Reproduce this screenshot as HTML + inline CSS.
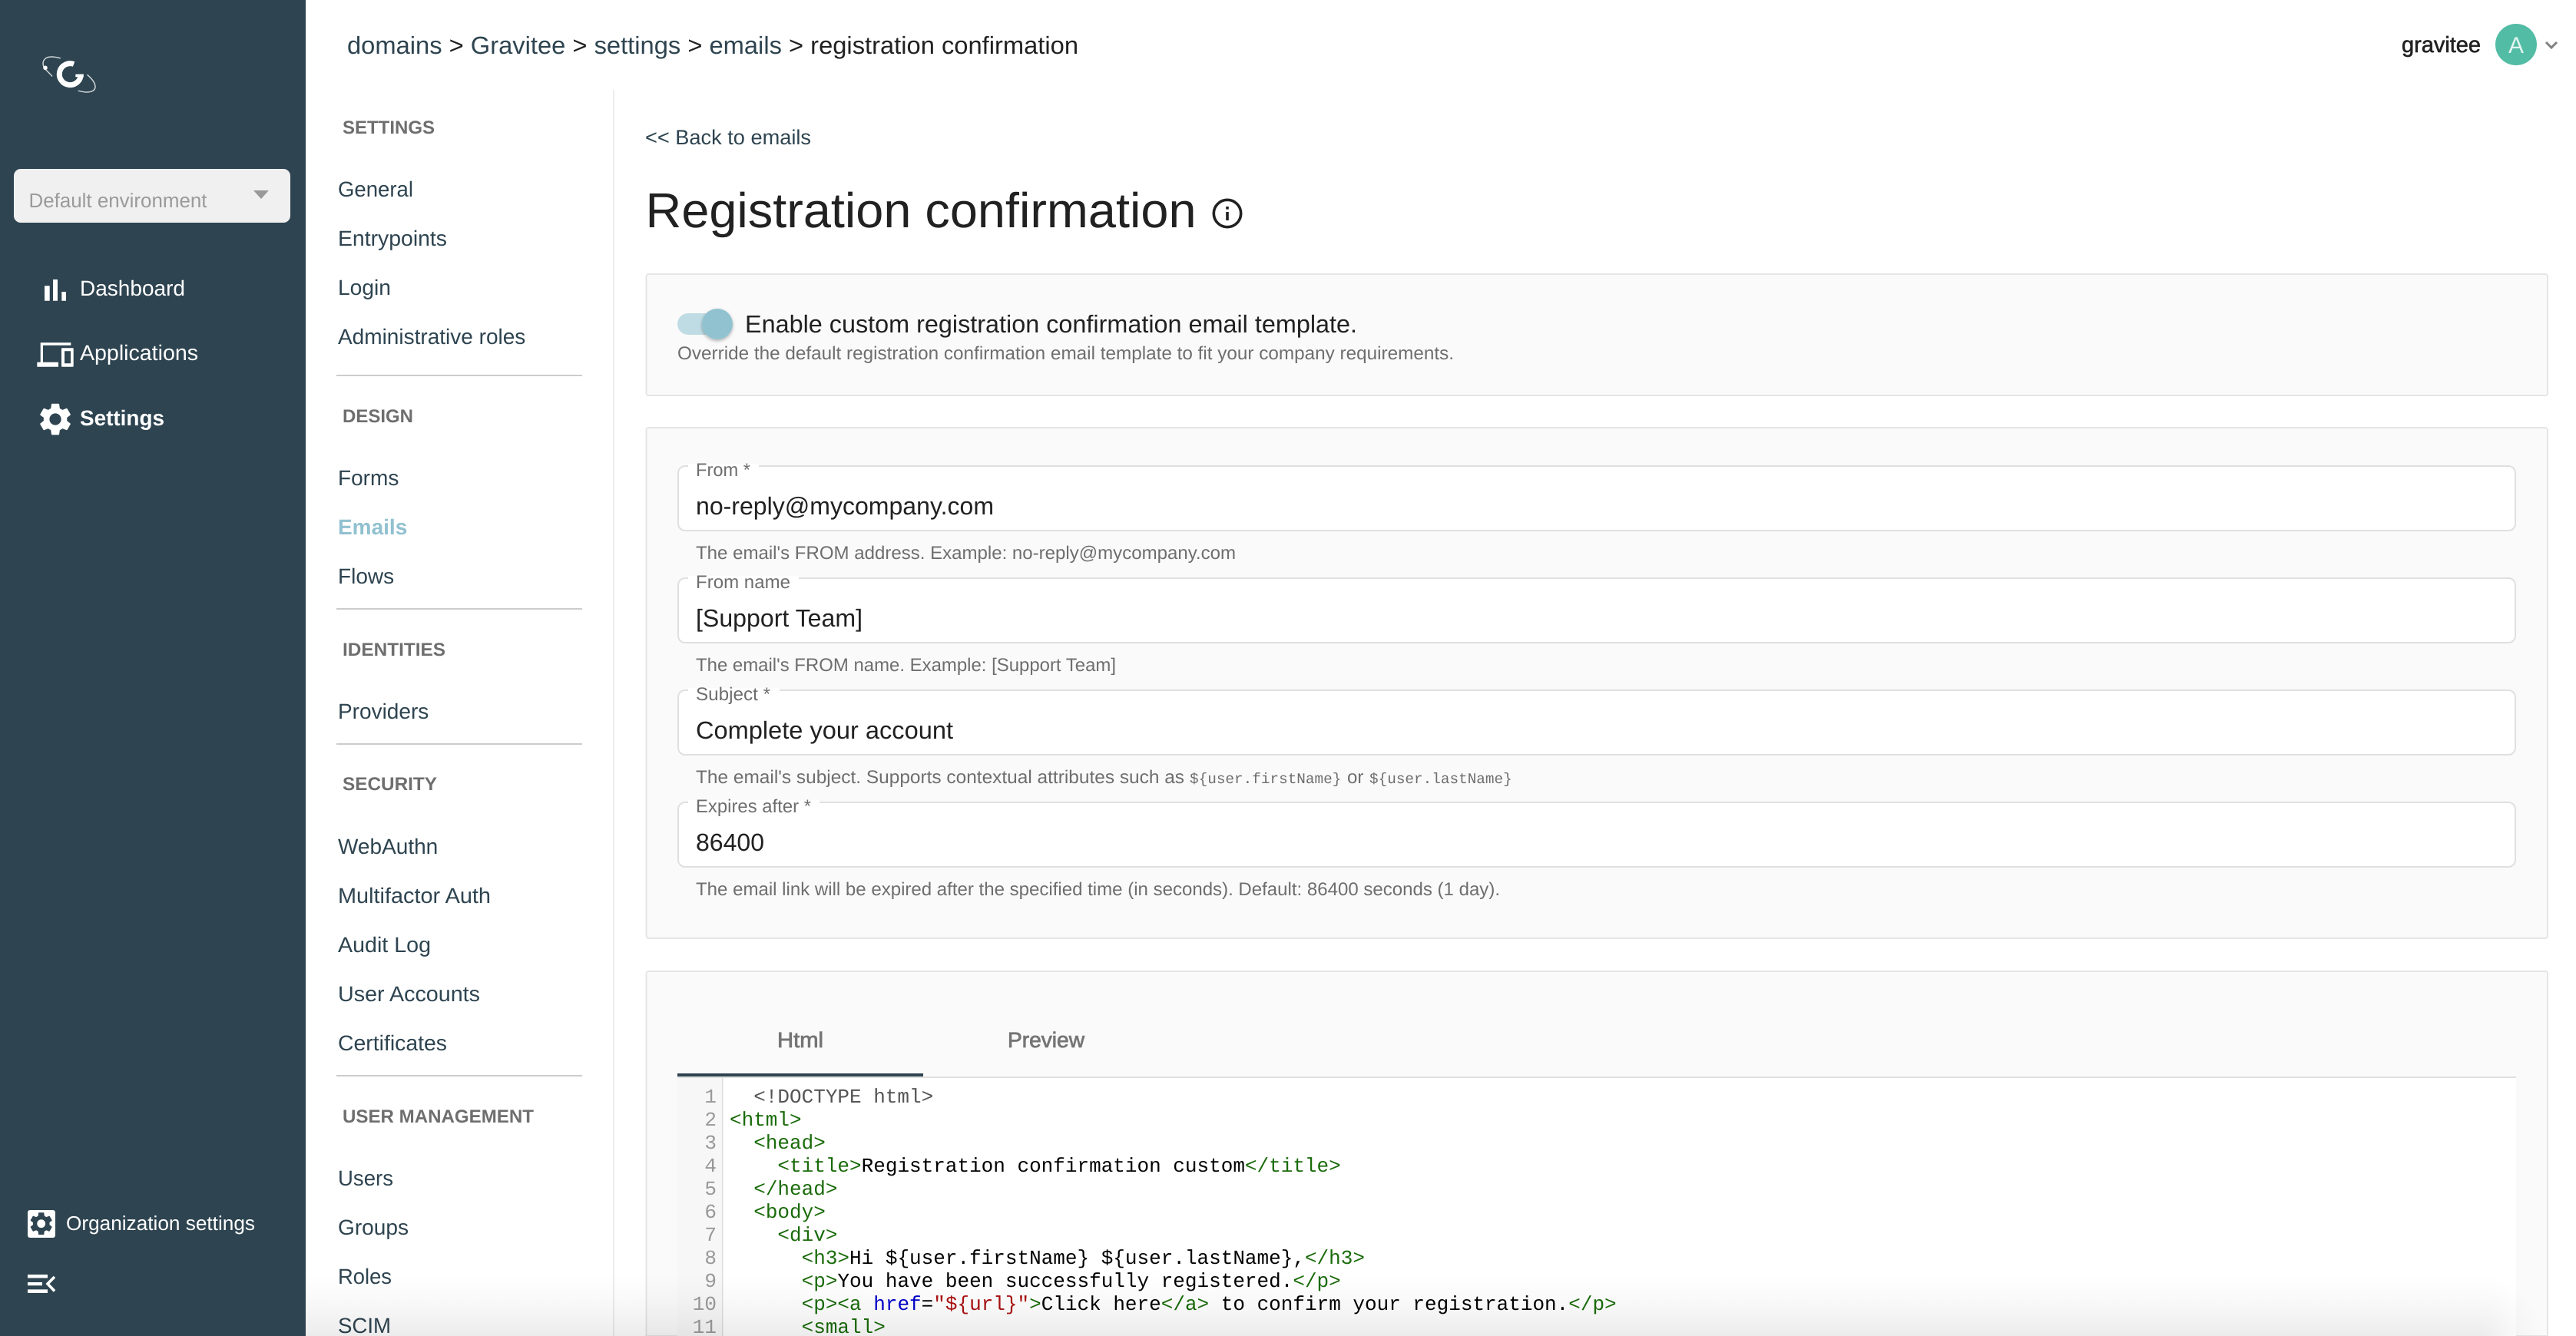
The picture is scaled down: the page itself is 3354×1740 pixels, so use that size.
<!DOCTYPE html>
<html lang="en">
<head>
<meta charset="utf-8">
<title>Registration confirmation</title>
<style>
html,body{margin:0;padding:0;background:#fff;width:3354px;height:1740px;overflow:hidden}
svg{display:block}
text{font-family:"Liberation Sans",Arial,sans-serif;white-space:pre;text-rendering:geometricPrecision}
.nav{font-size:28px;fill:#2e4450}
.hd{font-size:24px;font-weight:700;fill:#6e6e6e}
.lg{font-size:24px;fill:#6e6e6e}
.hint{font-size:24px;fill:#6e6e6e}
.val{font-size:32px;fill:#212121}
.tab{font-size:28px;fill:#757575;stroke:#757575;stroke-width:.8}
.ln{font-family:"Liberation Mono",monospace;font-size:26px;fill:#999}
.code{font-family:"Liberation Mono",monospace;font-size:26px;fill:#000}
.mono{font-family:"Liberation Mono",monospace;font-size:19.35px;fill:#6e6e6e}
.t{fill:#1a6b0a}.d{fill:#555}.a{fill:#00c}.s{fill:#a11}
.side{font-size:28px;fill:#fff}
</style>
</head>
<body>
<svg xmlns="http://www.w3.org/2000/svg" width="3354" height="1740" viewBox="0 0 3354 1740">
<defs>
<filter id="ks" x="-50%" y="-50%" width="200%" height="200%"><feDropShadow dx="0" dy="2" stdDeviation="2" flood-color="#000" flood-opacity=".3"/></filter>
<linearGradient id="bs" x1="0" y1="0" x2="0" y2="1">
<stop offset="0" stop-color="#000" stop-opacity="0"/>
<stop offset=".375" stop-color="#000" stop-opacity=".02"/>
<stop offset=".625" stop-color="#000" stop-opacity=".04"/>
<stop offset="1" stop-color="#000" stop-opacity=".075"/>
</linearGradient>
<radialGradient id="bc" gradientUnits="userSpaceOnUse" cx="3230" cy="1740" r="80">
<stop offset="0" stop-color="#000" stop-opacity=".075"/>
<stop offset=".375" stop-color="#000" stop-opacity=".04"/>
<stop offset=".625" stop-color="#000" stop-opacity=".02"/>
<stop offset="1" stop-color="#000" stop-opacity="0"/>
</radialGradient>
</defs>
<rect width="3354" height="1740" fill="#fff"/>

<!-- primary sidebar -->
<rect x="0" y="0" width="398" height="1740" fill="#2e4450"/>
<g fill="none" stroke-linecap="round">
<path d="M78.3 75.7C72 74 66 73 61 75C55 78 55 84 58 89L67.7 99" stroke="#cfd5d8" stroke-width="1.5"/>
<path d="M114 97.7C119 102 124 108 124 113C124 118 119 120 113 120C109 120 105 119 102.3 118.3" stroke="#cfd5d8" stroke-width="1.5"/>
</g>
<circle cx="59" cy="88.3" r="2.8" fill="#fff"/>
<path d="M96.1 83.5A14 14 0 1 0 105.3 96.7" fill="none" stroke="#fff" stroke-width="7"/>
<rect x="98.3" y="96.7" width="10.5" height="3.5" fill="#fff"/>

<rect x="18" y="220" width="360" height="70" rx="9" fill="#f0f0f0"/>
<text x="37.5" y="270" font-size="26" fill="#9a9a9a" textLength="232" lengthAdjust="spacingAndGlyphs">Default environment</text>
<path d="M330 248H350L340 259Z" fill="#999"/>

<path d="M58 372.3h6.7v19.4H58zM69 364h6v27.7h-6zM80.3 380H86v11.7h-5.7z" fill="#fff"/>
<text class="side" x="104" y="385" textLength="137" lengthAdjust="spacingAndGlyphs">Dashboard</text>
<path fill="#fff" fill-rule="evenodd" d="M52.7 446.3H92.3V449.7H56V471.7H76V477.7H48.3V471.7H52.7ZM81 453.3H94.7A1 1 0 0 1 95.7 454.3V476.7A1 1 0 0 1 94.7 477.7H81A1 1 0 0 1 80 476.7V454.3A1 1 0 0 1 81 453.3ZM84 457.3V473.3H92V457.3Z"/>
<text class="side" x="104" y="469" textLength="154" lengthAdjust="spacingAndGlyphs">Applications</text>
<g transform="translate(46.6 520.6) scale(2.12)"><path fill="#fff" d="M19.14 12.94c.04-.3.06-.61.06-.94 0-.32-.02-.64-.07-.94l2.03-1.58c.18-.14.23-.41.12-.61l-1.92-3.32c-.12-.22-.37-.29-.59-.22l-2.39.96c-.5-.38-1.03-.7-1.62-.94l-.36-2.54c-.04-.24-.24-.41-.48-.41h-3.84c-.24 0-.43.17-.47.41l-.36 2.54c-.59.24-1.13.57-1.62.94l-2.39-.96c-.22-.08-.47 0-.59.22L2.74 8.87c-.12.21-.08.47.12.61l2.03 1.58c-.05.3-.09.63-.09.94s.02.64.07.94l-2.03 1.58c-.18.14-.23.41-.12.61l1.92 3.32c.12.22.37.29.59.22l2.39-.96c.5.38 1.03.7 1.62.94l.36 2.54c.05.24.24.41.48.41h3.84c.24 0 .44-.17.47-.41l.36-2.54c.59-.24 1.13-.56 1.62-.94l2.39.96c.22.08.47 0 .59-.22l1.92-3.32c.12-.22.07-.47-.12-.61l-2.01-1.58zM12 15.6c-1.98 0-3.6-1.62-3.6-3.6s1.62-3.6 3.6-3.6 3.6 1.62 3.6 3.6-1.62 3.6-3.6 3.6z"/></g>
<text class="side" x="104" y="554" font-weight="700" textLength="110" lengthAdjust="spacingAndGlyphs">Settings</text>

<rect x="36" y="1576" width="36" height="36" rx="3" fill="#fff"/>
<g transform="translate(35.7 1575.7) scale(1.5)"><path fill="#2e4450" d="M19.14 12.94c.04-.3.06-.61.06-.94 0-.32-.02-.64-.07-.94l2.03-1.58c.18-.14.23-.41.12-.61l-1.92-3.32c-.12-.22-.37-.29-.59-.22l-2.39.96c-.5-.38-1.03-.7-1.62-.94l-.36-2.54c-.04-.24-.24-.41-.48-.41h-3.84c-.24 0-.43.17-.47.41l-.36 2.54c-.59.24-1.13.57-1.62.94l-2.39-.96c-.22-.08-.47 0-.59.22L2.74 8.87c-.12.21-.08.47.12.61l2.03 1.58c-.05.3-.09.63-.09.94s.02.64.07.94l-2.03 1.58c-.18.14-.23.41-.12.61l1.92 3.32c.12.22.37.29.59.22l2.39-.96c.5.38 1.03.7 1.62.94l.36 2.54c.05.24.24.41.48.41h3.84c.24 0 .44-.17.47-.41l.36-2.54c.59-.24 1.13-.56 1.62-.94l2.39.96c.22.08.47 0 .59-.22l1.92-3.32c.12-.22.07-.47-.12-.61l-2.01-1.58zM12 15.6c-1.98 0-3.6-1.62-3.6-3.6s1.62-3.6 3.6-3.6 3.6 1.62 3.6 3.6-1.62 3.6-3.6 3.6z"/></g>
<text x="86" y="1602" font-size="26" fill="#fff" textLength="246" lengthAdjust="spacingAndGlyphs">Organization settings</text>
<path d="M36 1660h26v4.5H36zM36 1670h19v4.3H36zM36 1679.4h26v4.6H36z" fill="#fff"/>
<path d="M71 1663L62 1672L71 1681.5" fill="none" stroke="#fff" stroke-width="3.6"/>

<!-- secondary nav -->
<rect x="798" y="117" width="2" height="1623" fill="#ededed"/>
<text class="hd" x="446" y="174" textLength="120" lengthAdjust="spacingAndGlyphs">SETTINGS</text>
<text class="nav" x="440" y="256" textLength="98" lengthAdjust="spacingAndGlyphs">General</text>
<text class="nav" x="440" y="320" textLength="142" lengthAdjust="spacingAndGlyphs">Entrypoints</text>
<text class="nav" x="440" y="384" textLength="69" lengthAdjust="spacingAndGlyphs">Login</text>
<text class="nav" x="440" y="448">Administrative roles</text>
<rect x="438" y="488" width="320" height="2" fill="#ccc"/>
<text class="hd" x="446" y="550">DESIGN</text>
<text class="nav" x="440" y="632">Forms</text>
<text class="nav" x="440" y="696" font-weight="700" style="fill:#91c1d0">Emails</text>
<text class="nav" x="440" y="760">Flows</text>
<rect x="438" y="792" width="320" height="2" fill="#ccc"/>
<text class="hd" x="446" y="854" textLength="134" lengthAdjust="spacingAndGlyphs">IDENTITIES</text>
<text class="nav" x="440" y="936">Providers</text>
<rect x="438" y="968" width="320" height="2" fill="#ccc"/>
<text class="hd" x="446" y="1029" textLength="123" lengthAdjust="spacingAndGlyphs">SECURITY</text>
<text class="nav" x="440" y="1112">WebAuthn</text>
<text class="nav" x="440" y="1176" textLength="199" lengthAdjust="spacingAndGlyphs">Multifactor Auth</text>
<text class="nav" x="440" y="1240" textLength="121" lengthAdjust="spacingAndGlyphs">Audit Log</text>
<text class="nav" x="440" y="1304" textLength="185" lengthAdjust="spacingAndGlyphs">User Accounts</text>
<text class="nav" x="440" y="1368" textLength="142" lengthAdjust="spacingAndGlyphs">Certificates</text>
<rect x="438" y="1400" width="320" height="2" fill="#ccc"/>
<text class="hd" x="446" y="1462" textLength="249" lengthAdjust="spacingAndGlyphs">USER MANAGEMENT</text>
<text class="nav" x="440" y="1544" textLength="72" lengthAdjust="spacingAndGlyphs">Users</text>
<text class="nav" x="440" y="1608" textLength="92" lengthAdjust="spacingAndGlyphs">Groups</text>
<text class="nav" x="440" y="1672" textLength="70" lengthAdjust="spacingAndGlyphs">Roles</text>
<text class="nav" x="440" y="1736" textLength="69" lengthAdjust="spacingAndGlyphs">SCIM</text>

<!-- top bar -->
<text x="452" y="70" font-size="32" fill="#2e4450" textLength="952" lengthAdjust="spacingAndGlyphs">domains <tspan fill="#212121">&gt;</tspan> Gravitee <tspan fill="#212121">&gt;</tspan> settings <tspan fill="#212121">&gt;</tspan> emails <tspan fill="#212121">&gt; registration confirmation</tspan></text>
<text x="3127" y="68" font-size="29" fill="#212121" stroke="#212121" stroke-width=".6" textLength="103" lengthAdjust="spacingAndGlyphs">gravitee</text>
<circle cx="3276" cy="58" r="27" fill="#52bca5"/>
<text x="3276" y="69" font-size="30" fill="#e3f4f0" text-anchor="middle">A</text>
<path d="M3315 55L3322 62L3329 55" fill="none" stroke="#808080" stroke-width="3"/>

<!-- heading -->
<text x="840" y="188" font-size="27" fill="#2e4450" textLength="216" lengthAdjust="spacingAndGlyphs">&lt;&lt; Back to emails</text>
<text x="840.5" y="296" font-size="64" fill="#212121" textLength="717" lengthAdjust="spacingAndGlyphs">Registration confirmation</text>
<circle cx="1598" cy="278" r="17.7" fill="none" stroke="#212121" stroke-width="3.6"/>
<rect x="1596.2" y="276" width="3.6" height="11" fill="#212121"/>
<rect x="1596.2" y="269" width="3.6" height="3.6" fill="#212121"/>

<!-- enable panel -->
<rect x="841.5" y="357" width="2475.5" height="158" rx="3" fill="#fafafa" stroke="#e5e5e5" stroke-width="2"/>
<rect x="882" y="408" width="68" height="28" rx="14" fill="#bfdce4"/>
<circle cx="934" cy="422" r="20" fill="#91c2d0" filter="url(#ks)"/>
<text x="970" y="433" class="val" textLength="797" lengthAdjust="spacingAndGlyphs">Enable custom registration confirmation email template.</text>
<text x="882" y="468" class="hint" textLength="1011" lengthAdjust="spacingAndGlyphs">Override the default registration confirmation email template to fit your company requirements.</text>

<!-- form panel -->
<rect x="841.5" y="557" width="2475.5" height="665" rx="3" fill="#fafafa" stroke="#e5e5e5" stroke-width="2"/>

<rect x="883" y="607" width="2392" height="84" rx="9" fill="#fff" stroke="#e0e0e0" stroke-width="2"/>
<rect x="896" y="604" width="92" height="6" fill="#fff"/>
<text class="lg" x="906" y="620" textLength="71" lengthAdjust="spacingAndGlyphs">From *</text>
<text class="val" x="906" y="670" textLength="388" lengthAdjust="spacingAndGlyphs">no-reply@mycompany.com</text>
<text class="hint" x="906" y="728" textLength="703" lengthAdjust="spacingAndGlyphs">The email's FROM address. Example: no-reply@mycompany.com</text>

<rect x="883" y="753" width="2392" height="84" rx="9" fill="#fff" stroke="#e0e0e0" stroke-width="2"/>
<rect x="896" y="750" width="144" height="6" fill="#fff"/>
<text class="lg" x="906" y="766" textLength="123" lengthAdjust="spacingAndGlyphs">From name</text>
<text class="val" x="906" y="816" textLength="217" lengthAdjust="spacingAndGlyphs">[Support Team]</text>
<text class="hint" x="906" y="874" textLength="547" lengthAdjust="spacingAndGlyphs">The email's FROM name. Example: [Support Team]</text>

<rect x="883" y="899" width="2392" height="84" rx="9" fill="#fff" stroke="#e0e0e0" stroke-width="2"/>
<rect x="896" y="896" width="119" height="6" fill="#fff"/>
<text class="lg" x="906" y="912" textLength="97" lengthAdjust="spacingAndGlyphs">Subject *</text>
<text class="val" x="906" y="962" textLength="335" lengthAdjust="spacingAndGlyphs">Complete your account</text>
<text class="hint" x="906" y="1020" textLength="636" lengthAdjust="spacingAndGlyphs">The email's subject. Supports contextual attributes such as</text>
<text class="mono" x="1549" y="1020">${user.firstName}</text>
<text class="hint" x="1754" y="1020">or</text>
<text class="mono" x="1783" y="1020">${user.lastName}</text>

<rect x="883" y="1045" width="2392" height="84" rx="9" fill="#fff" stroke="#e0e0e0" stroke-width="2"/>
<rect x="896" y="1042" width="171" height="6" fill="#fff"/>
<text class="lg" x="906" y="1058" textLength="150" lengthAdjust="spacingAndGlyphs">Expires after *</text>
<text class="val" x="906" y="1108">86400</text>
<text class="hint" x="906" y="1166" textLength="1047" lengthAdjust="spacingAndGlyphs">The email link will be expired after the specified time (in seconds). Default: 86400 seconds (1 day).</text>

<!-- editor panel -->
<path d="M841.5 1740V1268a3 3 0 0 1 3-3H3314a3 3 0 0 1 3 3V1740Z" fill="#fafafa" stroke="#e5e5e5" stroke-width="2"/>
<text class="tab" x="1012" y="1364" textLength="60" lengthAdjust="spacingAndGlyphs">Html</text>
<text class="tab" x="1312" y="1364" textLength="100" lengthAdjust="spacingAndGlyphs">Preview</text>
<rect x="882" y="1404" width="2394" height="336" fill="#fff"/>
<rect x="882" y="1402" width="2394" height="2" fill="#e0e0e0"/>
<rect x="882" y="1398" width="320" height="4" fill="#2e4450"/>
<rect x="882" y="1404" width="59" height="336" fill="#f7f7f7"/>
<rect x="940" y="1404" width="1.5" height="336" fill="#ddd"/>

<g text-anchor="end">
<text class="ln" x="933" y="1436">1</text>
<text class="ln" x="933" y="1466">2</text>
<text class="ln" x="933" y="1496">3</text>
<text class="ln" x="933" y="1526">4</text>
<text class="ln" x="933" y="1556">5</text>
<text class="ln" x="933" y="1586">6</text>
<text class="ln" x="933" y="1616">7</text>
<text class="ln" x="933" y="1646">8</text>
<text class="ln" x="933" y="1676">9</text>
<text class="ln" x="933" y="1706">10</text>
<text class="ln" x="933" y="1736">11</text>
</g>
<text class="code" x="950" y="1436"><tspan class="d">  &lt;!DOCTYPE html&gt;</tspan></text>
<text class="code" x="950" y="1466"><tspan class="t">&lt;html&gt;</tspan></text>
<text class="code" x="950" y="1496">  <tspan class="t">&lt;head&gt;</tspan></text>
<text class="code" x="950" y="1526">    <tspan class="t">&lt;title&gt;</tspan>Registration confirmation custom<tspan class="t">&lt;/title&gt;</tspan></text>
<text class="code" x="950" y="1556">  <tspan class="t">&lt;/head&gt;</tspan></text>
<text class="code" x="950" y="1586">  <tspan class="t">&lt;body&gt;</tspan></text>
<text class="code" x="950" y="1616">    <tspan class="t">&lt;div&gt;</tspan></text>
<text class="code" x="950" y="1646">      <tspan class="t">&lt;h3&gt;</tspan>Hi ${user.firstName} ${user.lastName},<tspan class="t">&lt;/h3&gt;</tspan></text>
<text class="code" x="950" y="1676">      <tspan class="t">&lt;p&gt;</tspan>You have been successfully registered.<tspan class="t">&lt;/p&gt;</tspan></text>
<text class="code" x="950" y="1706">      <tspan class="t">&lt;p&gt;&lt;a</tspan> <tspan class="a">href</tspan>=<tspan class="s">"${url}"</tspan><tspan class="t">&gt;</tspan>Click here<tspan class="t">&lt;/a&gt;</tspan> to confirm your registration.<tspan class="t">&lt;/p&gt;</tspan></text>
<text class="code" x="950" y="1736">      <tspan class="t">&lt;small&gt;</tspan></text>

<!-- bottom shadow -->
<rect x="398" y="1660" width="2832" height="80" fill="url(#bs)"/>
<rect x="3230" y="1660" width="80" height="80" fill="url(#bc)"/>
</svg>
</body>
</html>
